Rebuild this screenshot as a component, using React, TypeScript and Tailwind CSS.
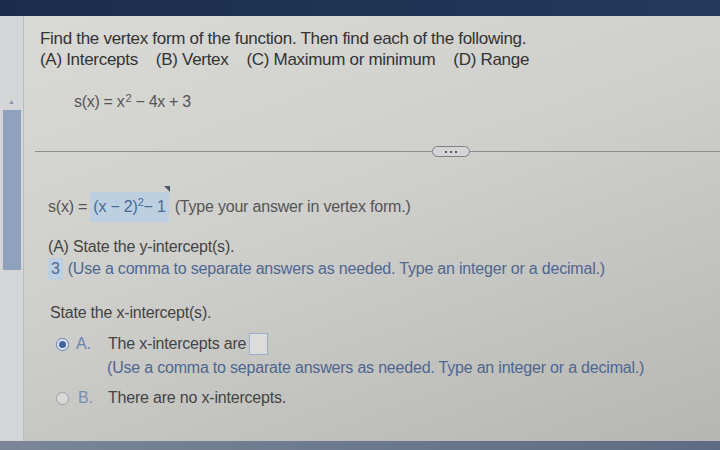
const FONT = { fontFamily: '"Liberation Sans", Arial, sans-serif' };

function Radio({ checked }: { checked?: boolean }) {
  return (
    <span
      className={`flex size-[13px] shrink-0 items-center justify-center rounded-full border ${
        checked ? 'border-[#5f7fb0] bg-[#dfe6f0]' : 'border-[#9aa3ae] bg-[#d8d8d6]'
      }`}
    >
      {checked && <span className="size-[7px] rounded-full bg-[#3f63a3]" />}
    </span>
  );
}

export default function App() {
  return (
    <div
      style={FONT}
      className="flex h-[450px] w-[720px] flex-col overflow-hidden bg-[linear-gradient(160deg,#dadad7_0%,#cfcfcc_45%,#b5b5b1_100%)] text-[#3b3b3d]"
    >
      <div className="h-[16px] shrink-0 bg-[linear-gradient(90deg,#1b2d4a,#233a5c)]" />
      <div className="flex flex-1">
        {/* left rail with scrollbar */}
        <div className="flex w-[24px] shrink-0 flex-col items-center border-r border-[#b9bcc0] bg-[#d3d5d6] pt-[82px]">
          <span className="text-[7px] leading-none text-[#8c98a8]">▲</span>
          <div className="mt-[5px] h-[160px] w-[18px] bg-[#8fa2bb]" />
        </div>

        <div className="flex-1 text-[16px] leading-none tracking-[-0.2px]">
          <div className="pl-[16px] pt-[14px] text-[17px] tracking-[-0.3px]">
            <p className="text-[#333]">Find the vertex form of the function. Then find each of the following.</p>
            <div className="mt-[4px] flex gap-[18px] text-[#333]">
              <span>(A) Intercepts</span>
              <span>(B) Vertex</span>
              <span>(C) Maximum or minimum</span>
              <span>(D) Range</span>
            </div>
            <p className="mt-[26px] pl-[34px] text-[16px] text-[#555]">
              s(x) = x<sup className="ml-[1px] text-[11px]">2</sup> − 4x + 3
            </p>
          </div>

          <div className="mt-[36px] flex items-center pl-[11px]">
            <div className="h-px w-[397px] bg-[#8c8d90]" />
            <div className="flex h-[11px] w-[38px] items-center justify-center gap-[3px] rounded-full border border-[#7d8088] bg-[#d4d5d6]">
              <span className="size-[2px] bg-[#555]" />
              <span className="size-[2px] bg-[#555]" />
              <span className="size-[2px] bg-[#555]" />
            </div>
            <div className="h-px flex-1 bg-[#8c8d90]" />
          </div>

          <div className="pl-[24px]">
            <div className="mt-[35px] flex items-center">
              <span className="text-[#555]">s(x) =</span>
              <span className="relative ml-[3px] flex h-[30px] items-center bg-[#bcd0e1] px-[3px] text-[#4a6a95]">
                (x − 2)<sup className="text-[11px]">2</sup> − 1
                <span className="absolute -right-[1px] top-[-6px] h-0 w-0 border-l-[6px] border-t-[6px] border-l-transparent border-t-[#4a5566]" />
              </span>
              <span className="ml-[6px] text-[#555]">(Type your answer in vertex form.)</span>
            </div>

            <p className="mt-[17px] text-[#444]">(A) State the y-intercept(s).</p>
            <div className="mt-[3px] flex items-center">
              <span className="flex h-[22px] items-center bg-[#bcd0e1] px-[3px] text-[#4a6a95]">3</span>
              <span className="ml-[5px] text-[#4f6790]">
                (Use a comma to separate answers as needed. Type an integer or a decimal.)
              </span>
            </div>

            <p className="mt-[25px] pl-[2px] text-[#444]">State the x-intercept(s).</p>

            <div className="mt-[12px] flex items-center pl-[8px]">
              <Radio checked />
              <span className="ml-[7px] w-[32px] text-[#6c84b0]">A.</span>
              <span className="text-[#444]">The x-intercepts are</span>
              <span className="ml-[3px] h-[22px] w-[19px] border border-[#9ab0cc] bg-[#dcdcda]" />
            </div>
            <p className="mt-[5px] pl-[59px] text-[#4f6790]">
              (Use a comma to separate answers as needed. Type an integer or a decimal.)
            </p>

            <div className="mt-[14px] flex items-center pl-[8px]">
              <Radio />
              <span className="ml-[9px] w-[30px] text-[#7b8fb3]">B.</span>
              <span className="text-[#444]">There are no x-intercepts.</span>
            </div>
          </div>
        </div>
      </div>
      <div className="h-[9px] shrink-0 bg-[linear-gradient(90deg,#7a8698,#5d6c84)]" />
    </div>
  );
}
